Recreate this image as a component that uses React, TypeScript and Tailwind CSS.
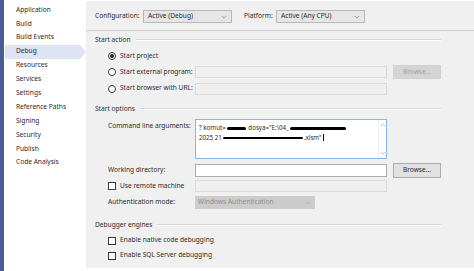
import React from "react";

const sideItems = [
  "Application",
  "Build",
  "Build Events",
  "Debug",
  "Resources",
  "Services",
  "Settings",
  "Reference Paths",
  "Signing",
  "Security",
  "Publish",
  "Code Analysis",
];

function Chevron({ className = "" }: { className?: string }) {
  return (
    <svg viewBox="0 0 8 5" className={`h-[4px] w-[6px] ${className}`} fill="none" stroke="currentColor" strokeWidth="1">
      <polyline points="1 1 4 4 7 1" />
    </svg>
  );
}

function Section({ title }: { title: string }) {
  return (
    <div className="flex h-[16px] items-center pl-[9px] pr-[33px]">
      <span>{title}</span>
      <div className="ml-[5px] h-[2px] flex-1 border-t border-[#d7d7d7] bg-white" />
    </div>
  );
}

function Radio({ checked }: { checked?: boolean }) {
  return (
    <span className="flex h-[8px] w-[8px] items-center justify-center rounded-full border border-[#3a3a3a] bg-white">
      {checked && <span className="h-[4px] w-[4px] rounded-full bg-[#222]" />}
    </span>
  );
}

function Check() {
  return <span className="h-[8px] w-[8px] border border-[#3a3a3a] bg-white" />;
}

function Bar({ w }: { w: number }) {
  return <span className="mx-[1px] inline-block h-[2.5px] rounded-full bg-black align-middle" style={{ width: w }} />;
}

export default function App() {
  return (
    <div className="flex h-[271px] w-[474px] bg-white font-['Noto_Sans',sans-serif] text-[6.6px] leading-none text-[#2a2a2a]">
      <div className="w-[4px] bg-[#4a5d92]" />

      {/* side nav */}
      <div className="w-[82px] pt-[3px]">
        {sideItems.map((item) => {
          const active = item === "Debug";
          return (
            <div key={item} className="flex h-[13.9px] items-center">
              <div className={`ml-[1px] flex h-full w-[75px] items-center pl-[11px] ${active ? "bg-[#dfe4f4]" : ""}`}>
                {item}
              </div>
              {active && (
                <span className="h-0 w-0 border-y-[7px] border-l-[6px] border-y-transparent border-l-[#dfe4f4]" />
              )}
            </div>
          );
        })}
      </div>

      {/* main panel */}
      <div className="mb-[3px] mt-[1px] flex flex-1 flex-col bg-[#f0f0f0]">
        <div className="flex h-[30px] items-center border-b border-[#cdcdcd] pl-[9px] pt-[2px]">
          <span className="w-[48px]">Configuration:</span>
          <div className="flex h-[13px] w-[89px] items-center justify-between border border-[#b8b8b8] bg-[#e6e6e6] pl-[4px] pr-[4px]">
            <span>Active (Debug)</span>
            <Chevron className="text-[#888]" />
          </div>
          <span className="ml-[12px] w-[32px]">Platform:</span>
          <div className="flex h-[13px] w-[89px] items-center justify-between border border-[#b8b8b8] bg-[#e6e6e6] pl-[4px] pr-[4px]">
            <span>Active (Any CPU)</span>
            <Chevron className="text-[#888]" />
          </div>
        </div>

        <div className="mt-[1px]">
          <Section title="Start action" />
        </div>

        <div className="flex flex-col pl-[22px]">
          <div className="flex h-[16px] items-center gap-[4px]">
            <Radio checked />
            <span>Start project</span>
          </div>
          <div className="flex h-[16px] items-center">
            <div className="flex w-[87px] items-center gap-[4px]">
              <Radio />
              <span>Start external program:</span>
            </div>
            <div className="h-[12px] w-[192px] border border-[#dadada] bg-[#f0f0f0]" />
            <div className="ml-[6px] flex h-[14px] w-[48px] items-center justify-center border border-[#d0d0d0] bg-[#d4d4d4] text-[#a3a3a3]">
              Browse...
            </div>
          </div>
          <div className="flex h-[17px] items-center">
            <div className="flex w-[87px] items-center gap-[4px]">
              <Radio />
              <span>Start browser with URL:</span>
            </div>
            <div className="h-[12px] w-[192px] border border-[#dadada] bg-[#f0f0f0]" />
          </div>
        </div>

        <div className="mt-[4px]">
          <Section title="Start options" />
        </div>

        <div className="flex flex-col pl-[22px]">
          <div className="mt-[2px] flex items-start">
            <span className="mt-[4px] w-[87px]">Command line arguments:</span>
            <div className="flex h-[40px] w-[192px] border border-[#86b6e4] bg-white">
              <div className="flex-1 pl-[3px] pt-[3px] text-[6.2px] leading-[9.5px]">
                <div>
                  ? komut=
                  <Bar w={19} />
                  &nbsp;dosya="E:\04_
                  <Bar w={56} />
                </div>
                <div>
                  2025 21
                  <Bar w={80} />
                  .xlsm"<span className="ml-[1px] inline-block h-[7px] w-[1px] bg-black align-middle" />
                </div>
              </div>
              <div className="flex w-[8px] flex-col items-center justify-between border-l border-[#eeeeee] py-[3px] text-[#b0b0b0]">
                <Chevron className="rotate-180" />
                <Chevron />
              </div>
            </div>
          </div>

          <div className="mt-[4px] flex h-[14px] items-center">
            <span className="w-[87px]">Working directory:</span>
            <div className="h-[13px] w-[192px] border border-[#ababab] bg-white" />
            <div className="ml-[6px] flex h-[15px] w-[48px] items-center justify-center border border-[#adadad] bg-[#e1e1e1]">
              Browse...
            </div>
          </div>

          <div className="mt-[3px] flex h-[12px] items-center">
            <div className="flex w-[87px] items-center gap-[4px]">
              <Check />
              <span>Use remote machine</span>
            </div>
            <div className="h-[12px] w-[192px] border border-[#dadada] bg-[#f0f0f0]" />
          </div>

          <div className="mt-[4px] flex h-[13px] items-center">
            <span className="w-[87px]">Authentication mode:</span>
            <div className="flex h-[13px] w-[120px] items-center justify-between bg-[#cccccc] pl-[3px] pr-[4px] text-[#8e8e8e]">
              <span>Windows Authentication</span>
              <Chevron className="text-[#a8a8a8]" />
            </div>
          </div>
        </div>

        <div className="mt-[8px]">
          <Section title="Debugger engines" />
        </div>

        <div className="flex flex-col pl-[22px]">
          <div className="flex h-[15px] items-center gap-[4px]">
            <Check />
            <span>Enable native code debugging</span>
          </div>
          <div className="flex h-[15px] items-center gap-[4px]">
            <Check />
            <span>Enable SQL Server debugging</span>
          </div>
        </div>
      </div>
    </div>
  );
}
